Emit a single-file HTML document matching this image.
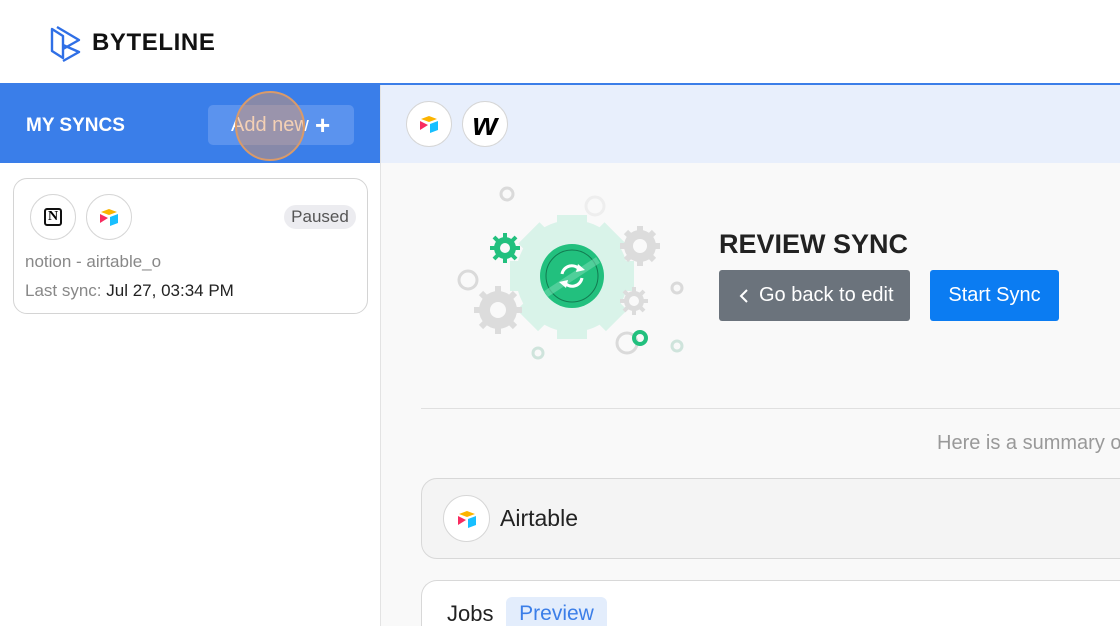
<!DOCTYPE html>
<html style="width:1120px;height:626px;overflow:hidden"><head><meta charset="utf-8"><style>
*{box-sizing:border-box;margin:0;padding:0}
body{width:1120px;height:626px;overflow:hidden;font-family:"Liberation Sans",sans-serif;background:#fff;position:relative}
.abs{position:absolute}
.circ{position:absolute;border-radius:50%;background:#fff;border:1px solid #d6d6d6;display:flex;align-items:center;justify-content:center}
</style></head><body>
<div class="abs" style="left:0;top:0;width:1120px;height:83px;background:#fff"></div>
<svg class="abs" style="left:50px;top:25px" width="32" height="38" viewBox="0 0 32 38"><g fill="none" stroke="#2f6fe6" stroke-width="2.4" stroke-linejoin="round"><path d="M2 4 L2 26 L13 33 L13 11 Z"/><path d="M7 2 L29 15 L13 24"/><path d="M13 20 L29 27 L13 36"/></g></svg>
<div class="abs" style="left:92px;top:29px;font-size:24px;font-weight:bold;letter-spacing:0.6px;color:#111">BYTELINE</div>
<div class="abs" style="left:0;top:83px;width:1120px;height:2px;background:#3b7ee8"></div>
<div class="abs" style="left:0;top:85px;width:380px;height:78px;background:#3a7ee9"></div>
<div class="abs" style="left:26px;top:115px;color:#fff;font-weight:bold;font-size:19px">MY SYNCS</div>
<div class="abs" style="left:208px;top:105px;width:146px;height:40px;background:#5b93ee;border-radius:5px"></div>
<div class="abs" style="left:231px;top:114px;color:#fff;font-size:20px">Add new</div>
<div class="abs" style="left:315px;top:113px;color:#fff;font-size:26px;font-weight:bold;line-height:24px">+</div>
<div class="abs" style="left:235px;top:91px;width:70px;height:70px;border-radius:50%;background:rgba(230,150,90,0.45);border:2px solid #d99a6a"></div>
<div class="abs" style="left:380px;top:85px;width:1px;height:541px;background:#e3e3e3"></div>
<div class="abs" style="left:13px;top:178px;width:355px;height:136px;border:1px solid #d4d4d4;border-radius:14px;background:#fff"></div>
<div class="circ" style="left:30px;top:194px;width:46px;height:46px"><div style="width:18px;height:18px;border:2px solid #111;border-radius:3px;font-family:'Liberation Serif',serif;font-weight:bold;font-size:14px;line-height:14px;text-align:center">N</div></div>
<div class="circ" style="left:86px;top:194px;width:46px;height:46px"><svg width="20" height="18" viewBox="0 0 20 18"><path d="M10 1 L18 4 L10 7 L2 4Z" fill="#fcb400"/><path d="M11 9 L19 6 L19 15 L11 18Z" fill="#18bfff"/><path d="M1 6 L9 10 L1 15Z" fill="#f82b60"/></svg></div>
<div class="abs" style="left:284px;top:205px;width:72px;height:24px;border-radius:12px;background:#ececf0;color:#555;font-size:17px;text-align:center;line-height:24px">Paused</div>
<div class="abs" style="left:25px;top:252px;color:#888;font-size:17px">notion - airtable_o</div>
<div class="abs" style="left:25px;top:281px;font-size:17px;color:#888">Last sync: <span style="color:#222">Jul 27, 03:34 PM</span></div>
<div class="abs" style="left:381px;top:85px;width:739px;height:78px;background:#e8effc"></div>
<div class="abs" style="left:381px;top:163px;width:739px;height:463px;background:#f9f9f9"></div>
<div class="circ" style="left:406px;top:101px;width:46px;height:46px"><svg width="20" height="18" viewBox="0 0 20 18"><path d="M10 1 L18 4 L10 7 L2 4Z" fill="#fcb400"/><path d="M11 9 L19 6 L19 15 L11 18Z" fill="#18bfff"/><path d="M1 6 L9 10 L1 15Z" fill="#f82b60"/></svg></div>
<div class="circ" style="left:462px;top:101px;width:46px;height:46px;font-weight:bold;font-style:italic;font-size:32px;color:#000;line-height:40px">w</div>
<svg class="abs" style="left:440px;top:170px" width="260" height="200" viewBox="0 0 260 200">
<g fill="#d9f3e9"><circle cx="132" cy="106" r="56"/><rect x="117" y="45" width="30" height="124"/><rect x="70" y="91" width="124" height="30"/><rect x="117" y="45" width="30" height="124" transform="rotate(45 132 106)"/><rect x="117" y="45" width="30" height="124" transform="rotate(-45 132 106)"/></g>
<circle cx="132" cy="106" r="32" fill="#22c07e"/>
<circle cx="132" cy="106" r="26" fill="none" stroke="#127a50" stroke-width="1"/>
<path d="M106 124 L158 90" stroke="#6fd9ad" stroke-width="7" opacity=".6"/>
<g fill="none" stroke="#fff" stroke-width="3"><path d="M122 104 A10 10 0 0 1 140 100"/><path d="M142 108 A10 10 0 0 1 124 112"/></g>
<path d="M138 94 L145 100 L136 102Z M126 118 L119 112 L128 110Z" fill="#fff"/>
<g fill="#22c07e"><circle cx="65" cy="78" r="11"/><g stroke="#22c07e" stroke-width="4"><path d="M65 63 V93 M50 78 H80 M54 67 L76 89 M76 67 L54 89"/></g></g><circle cx="65" cy="78" r="5" fill="#f9f9f9"/>
<g fill="#dcdcdc"><circle cx="200" cy="76" r="16"/><circle cx="58" cy="140" r="19"/><circle cx="194" cy="131" r="10"/>
<g stroke="#dcdcdc" stroke-width="6"><path d="M200 56 V96 M180 76 H220 M186 62 L214 90 M214 62 L186 90"/><path d="M58 116 V164 M34 140 H82 M41 123 L75 157 M75 123 L41 157"/></g>
<g stroke="#dcdcdc" stroke-width="4"><path d="M194 117 V145 M180 131 H208 M184 121 L204 141 M204 121 L184 141"/></g></g>
<g fill="#f9f9f9"><circle cx="200" cy="76" r="7"/><circle cx="58" cy="140" r="8"/><circle cx="194" cy="131" r="5"/></g>
<g fill="none" stroke="#dadada" stroke-width="3"><circle cx="67" cy="24" r="6"/><circle cx="155" cy="36" r="9" stroke="#eee"/><circle cx="28" cy="110" r="9"/><circle cx="237" cy="118" r="5"/><circle cx="187" cy="173" r="10"/><circle cx="98" cy="183" r="5" stroke="#cfe4dc"/><circle cx="237" cy="176" r="5" stroke="#cfe4dc"/></g>
<circle cx="200" cy="168" r="6" fill="none" stroke="#22c07e" stroke-width="4"/>
</svg>
<div class="abs" style="left:719px;top:229px;font-size:27px;font-weight:bold;color:#222">REVIEW SYNC</div>
<div class="abs" style="left:719px;top:270px;width:191px;height:51px;background:#6b737c;border-radius:3px;color:#fff;font-size:20px;line-height:51px;padding-left:40px">Go back to edit</div>
<svg class="abs" style="left:739px;top:289px" width="10" height="14"><path d="M8 1 L2 7 L8 13" fill="none" stroke="#fff" stroke-width="2"/></svg>
<div class="abs" style="left:930px;top:270px;width:129px;height:51px;background:#0b7cf2;border-radius:3px;color:#fff;font-size:20px;line-height:51px;text-align:center">Start Sync</div>
<div class="abs" style="left:421px;top:408px;width:699px;height:1px;background:#e0e0e0"></div>
<div class="abs" style="left:937px;top:432px;font-size:20px;color:#999;white-space:nowrap">Here is a summary of</div>
<div class="abs" style="left:421px;top:478px;width:720px;height:81px;background:#f4f4f4;border:1px solid #d8d8d8;border-radius:16px"></div>
<div class="circ" style="left:443px;top:495px;width:47px;height:47px"><svg width="20" height="18" viewBox="0 0 20 18"><path d="M10 1 L18 4 L10 7 L2 4Z" fill="#fcb400"/><path d="M11 9 L19 6 L19 15 L11 18Z" fill="#18bfff"/><path d="M1 6 L9 10 L1 15Z" fill="#f82b60"/></svg></div>
<div class="abs" style="left:500px;top:505px;font-size:23px;color:#222">Airtable</div>
<div class="abs" style="left:421px;top:580px;width:720px;height:46px;background:#fff;border:1px solid #d8d8d8;border-bottom:none;border-radius:16px 16px 0 0"></div>
<div class="abs" style="left:447px;top:601px;font-size:22px;color:#222">Jobs</div>
<div class="abs" style="left:506px;top:597px;width:101px;height:29px;background:#e3edfc;border-radius:6px 6px 0 0;color:#3b7ee8;font-size:21px;text-align:center;line-height:34px">Preview</div>
</body></html>
